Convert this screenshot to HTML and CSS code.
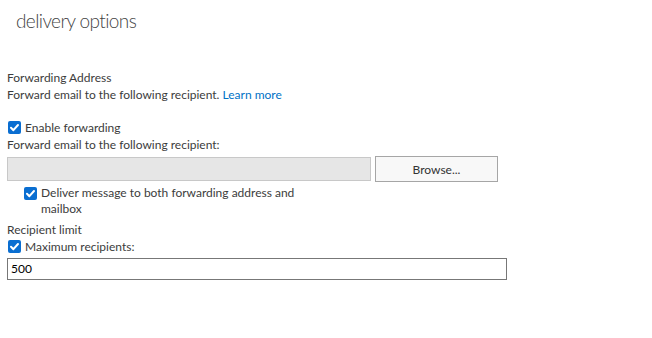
FILE: index.html
```html
<!DOCTYPE html>
<html>
<head>
<meta charset="utf-8">
<link rel="stylesheet" href="styles.css">
</head>
<body>
<div class="page">
  <h1 class="title">delivery options</h1>
  <div class="form">
    <div class="text">Forwarding Address</div>
    <div class="text">Forward email to the following recipient. <a class="link" href="#">Learn more</a></div>

    <label class="check-row first">
      <span class="box"><svg viewBox="0 0 13 13" width="13" height="13"><rect width="13" height="13" rx="2" fill="#0a6ed1"/><path d="M3 6.8 L5.4 9.2 L10 4" stroke="#fff" stroke-width="2" fill="none" stroke-linecap="round" stroke-linejoin="round"/></svg></span>
      <span>Enable forwarding</span>
    </label>
    <div class="text">Forward email to the following recipient:</div>
    <div class="input-row">
      <div class="input disabled"></div>
      <button class="btn">Browse...</button>
    </div>
    <label class="check-row nested">
      <span class="box"><svg viewBox="0 0 13 13" width="13" height="13"><rect width="13" height="13" rx="2" fill="#0a6ed1"/><path d="M3 6.8 L5.4 9.2 L10 4" stroke="#fff" stroke-width="2" fill="none" stroke-linecap="round" stroke-linejoin="round"/></svg></span>
      <span class="wrap">Deliver message to both forwarding address and mailbox</span>
    </label>

    <div class="text section">Recipient limit</div>
    <label class="check-row">
      <span class="box"><svg viewBox="0 0 13 13" width="13" height="13"><rect width="13" height="13" rx="2" fill="#0a6ed1"/><path d="M3 6.8 L5.4 9.2 L10 4" stroke="#fff" stroke-width="2" fill="none" stroke-linecap="round" stroke-linejoin="round"/></svg></span>
      <span>Maximum recipients:</span>
    </label>
    <div class="input value">500</div>
  </div>
</div>
</body>
</html>
```
FILE: styles.css
```css
html, body {
  margin: 0;
  padding: 0;
  background: #fff;
}
body {
  font-family: "Lato", "Open Sans", sans-serif;
  font-size: 12px;
  color: #3c3c3c;
}
.page {
  width: 652px;
}
.title {
  margin: 8px 0 0 16px;
  font-size: 19px;
  letter-spacing: -0.6px;
  line-height: 26px;
  font-weight: 300;
  color: #444;
}
.form {
  padding-left: 7px;
  margin-top: 35px;
}
.text {
  line-height: 17px;
}
.link {
  color: #0072c6;
  text-decoration: none;
}
.check-row {
  display: flex;
  align-items: flex-start;
  line-height: 17px;
  gap: 4px;
}
.check-row .box {
  display: flex;
  width: 13px;
  height: 17px;
  align-items: center;
  margin-left: 1px;
}
.check-row.first {
  margin-top: 16px;
}
.check-row.nested {
  margin-left: 16px;
  margin-top: 3px;
  line-height: 16px;
}
.check-row.nested .box {
  height: 16px;
}
.wrap {
  width: 265px;
}
.input-row {
  display: flex;
  align-items: center;
  gap: 4px;
  margin-top: 3px;
}
.input {
  box-sizing: border-box;
  border: 1px solid #777;
  height: 22px;
}
.input.disabled {
  width: 364px;
  height: 24px;
  background: #e6e6e6;
  border-color: #c8c8c8;
}
.btn {
  box-sizing: border-box;
  width: 123px;
  height: 26px;
  background: #f8f8f8;
  border: 1px solid #a6a6a6;
  border-radius: 0;
  font: inherit;
  color: #333;
  padding: 0;
}
.section {
  margin-top: 4px;
}
.input.value {
  width: 500px;
  margin-top: 3px;
  padding: 0 3px;
  line-height: 20px;
  color: #000;
}
```
